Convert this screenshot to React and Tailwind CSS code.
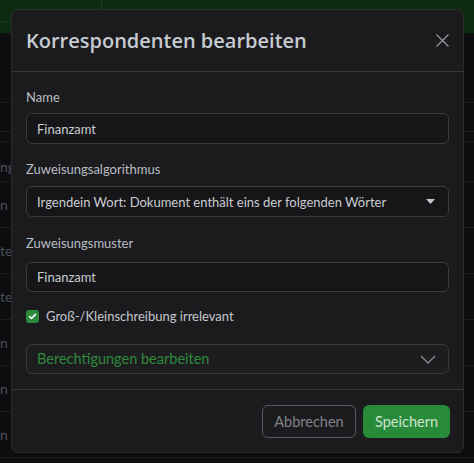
import React from "react";

const font = { fontFamily: 'Lato, "Open Sans", sans-serif' };
const titleFont = { fontFamily: '"Open Sans", "Noto Sans", sans-serif' };

function BgRow({ text }) {
  return (
    <div className="h-[46px] border-b border-[#1c1c20] flex items-center">
      <span className="text-[14px] text-[#4a4f56] whitespace-nowrap">{text}</span>
    </div>
  );
}

export default function App() {
  const rows = ["n V", "te", "te", "n V", "n V", "n V"];
  return (
    <div className="relative w-[474px] h-[463px] overflow-hidden bg-[#0d0d0f]" style={font}>
      {/* page behind */}
      <div className="flex flex-col">
        <div className="h-[33px] flex bg-[#0e2b10]">
          <div className="w-[102px] border-r border-[#1d3a1e] flex flex-col">
            <div className="h-[22px] border-b border-[#1a3a1b]" />
          </div>
          <div className="flex-1" />
        </div>
        <div className="h-[70px] border-b border-[#1c1c20]" />
        <div className="h-[29px] border-b border-[#1c1c20]" />
        <div className="h-[10px] border-b border-[#1c1c20]" />
        <div className="flex flex-col">
          <div className="h-[40px] border-b border-[#1c1c20] flex items-end pb-[4px]">
            <span className="text-[14px] text-[#4d525a]">ng</span>
          </div>
          {rows.map((t, i) => (
            <BgRow key={i} text={t} />
          ))}
        </div>
      </div>

      {/* modal layer */}
      <div className="absolute inset-0 flex justify-start items-start pl-[11px] pt-[9px]">
        <div className="w-[453px] h-[444px] rounded-[7px] border border-[#2c2c30] bg-[#1b1b1d] flex flex-col">
          {/* header */}
          <div className="h-[62px] border-b border-[#37373b] flex items-center justify-between pl-[14px] pr-[13px]">
            <h1 className="text-[20px] font-semibold text-[#c6cbd3] leading-none" style={titleFont}>
              Korrespondenten bearbeiten
            </h1>
            <svg width="15" height="15" viewBox="0 0 16 16" className="mt-[-1px]">
              <path d="M2 2 L14 14 M14 2 L2 14" stroke="#a3a7ad" strokeWidth="1.4" strokeLinecap="round" />
            </svg>
          </div>

          {/* body */}
          <div className="flex flex-col px-[14px] pt-[16px]">
            <label className="text-[13px] text-[#b9bdc4] leading-[18px]">Name</label>
            <div className="mt-[7px] h-[31px] rounded-[6px] border border-[#3a3a3f] bg-[#161618] flex items-center px-[10px]">
              <span className="text-[13px] text-[#c9ccd2] leading-[18px]">Finanzamt</span>
            </div>

            <label className="mt-[16px] text-[13px] text-[#b9bdc4] leading-[18px]">Zuweisungsalgorithmus</label>
            <div className="mt-[8px] h-[31px] rounded-[6px] border border-[#3a3a3f] bg-[#161618] flex items-center justify-between pl-[10px] pr-[13px]">
              <span className="text-[13px] text-[#c9ccd2] whitespace-nowrap leading-[18px]">
                Irgendein Wort: Dokument enthält eins der folgenden Wörter
              </span>
              <svg width="9" height="5" viewBox="0 0 9 5">
                <path d="M0 0 H9 L4.5 5 Z" fill="#c4c7cc" />
              </svg>
            </div>

            <label className="mt-[17px] text-[13px] text-[#b9bdc4] leading-[18px]">Zuweisungsmuster</label>
            <div className="mt-[10px] h-[30px] rounded-[6px] border border-[#3a3a3f] bg-[#161618] flex items-center px-[10px]">
              <span className="text-[13px] text-[#c9ccd2] leading-[18px]">Finanzamt</span>
            </div>

            <div className="mt-[15px] flex items-center gap-[7px] h-[18px]">
              <div className="w-[13px] h-[13px] rounded-[3px] bg-[#2b8a3b] flex items-center justify-center">
                <svg width="9" height="9" viewBox="0 0 9 9">
                  <path d="M1.6 4.6 L3.6 6.5 L7.4 2.4" stroke="#ffffff" strokeWidth="1.6" fill="none" strokeLinecap="round" strokeLinejoin="round" />
                </svg>
              </div>
              <span className="text-[13px] text-[#c3c7cd] leading-[18px]">Groß-/Kleinschreibung irrelevant</span>
            </div>

            <div className="mt-[19px] h-[30px] rounded-[6px] border border-[#38383d] bg-[#1d1d20] flex items-center justify-between pl-[10px] pr-[12px]">
              <span className="text-[14.5px] text-[#2f8a3b] leading-[18px]">Berechtigungen bearbeiten</span>
              <svg width="16" height="9" viewBox="0 0 16 9">
                <path d="M1 1 L8 8 L15 1" stroke="#8a8e94" strokeWidth="1.3" fill="none" />
              </svg>
            </div>
          </div>

          {/* footer */}
          <div className="mt-[15px] border-t border-[#37373b] flex justify-end gap-[7px] px-[13px] pt-[15px]">
            <button className="h-[33px] w-[94px] rounded-[6px] border border-[#55585e] text-[14.5px] text-[#7f8389] leading-[18px]">
              Abbrechen
            </button>
            <button className="h-[33px] w-[87px] rounded-[6px] bg-[#288b39] text-[14.5px] text-[#cfe3d1] leading-[18px]">
              Speichern
            </button>
          </div>
        </div>
      </div>
    </div>
  );
}
